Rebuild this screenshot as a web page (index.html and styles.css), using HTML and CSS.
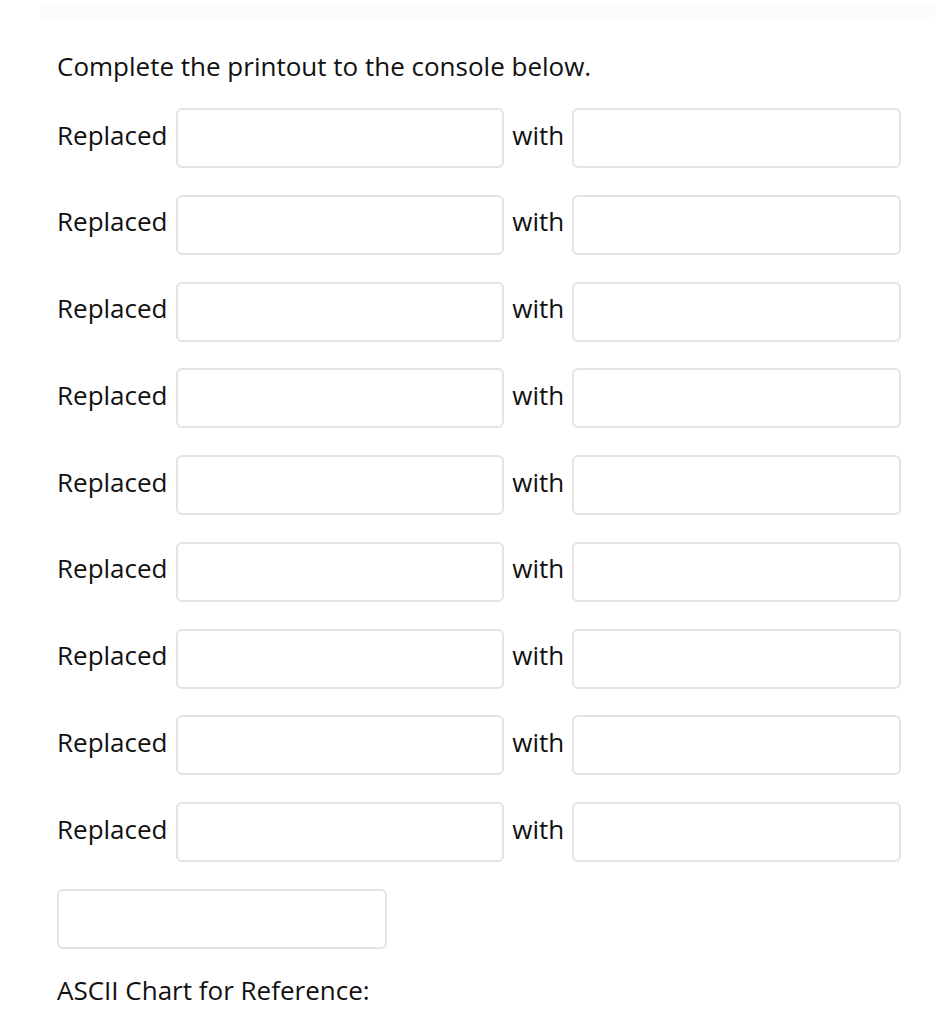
FILE: index.html
```html
<!DOCTYPE html>
<html>
<head>
<meta charset="utf-8">
<link rel="stylesheet" href="styles.css">
</head>
<body>
<div class="page">
  <div class="band"></div>
  <div class="content">
    <p class="intro">Complete the printout to the console below.</p>
    <div class="rows">
      <div class="row"><span class="lbl">Replaced</span><input class="box" type="text"><span class="lbl">with</span><input class="box" type="text"></div>
      <div class="row"><span class="lbl">Replaced</span><input class="box" type="text"><span class="lbl">with</span><input class="box" type="text"></div>
      <div class="row"><span class="lbl">Replaced</span><input class="box" type="text"><span class="lbl">with</span><input class="box" type="text"></div>
      <div class="row"><span class="lbl">Replaced</span><input class="box" type="text"><span class="lbl">with</span><input class="box" type="text"></div>
      <div class="row"><span class="lbl">Replaced</span><input class="box" type="text"><span class="lbl">with</span><input class="box" type="text"></div>
      <div class="row"><span class="lbl">Replaced</span><input class="box" type="text"><span class="lbl">with</span><input class="box" type="text"></div>
      <div class="row"><span class="lbl">Replaced</span><input class="box" type="text"><span class="lbl">with</span><input class="box" type="text"></div>
      <div class="row"><span class="lbl">Replaced</span><input class="box" type="text"><span class="lbl">with</span><input class="box" type="text"></div>
      <div class="row"><span class="lbl">Replaced</span><input class="box" type="text"><span class="lbl">with</span><input class="box" type="text"></div>
      <div class="row"><input class="box" type="text"></div>
    </div>
    <p class="ascii">ASCII Chart for Reference:</p>
  </div>
</div>
</body>
</html>
```
FILE: styles.css
```css
html, body {
  margin: 0;
  padding: 0;
  background: #ffffff;
}
body {
  font-family: "Open Sans", "DejaVu Sans", sans-serif;
  color: #111111;
}
.page {
  padding-top: 4px;
}
.band {
  margin-left: 40px;
  height: 18px;
  background: #fcfcfc;
}
.content {
  padding-left: 57px;
  padding-right: 34px;
}
.intro {
  font-size: 26px;
  line-height: 35px;
  margin: 27px 0 0 0;
}
.rows {
  margin-top: 24px;
  display: flex;
  flex-direction: column;
  gap: 26.75px;
}
.row {
  display: flex;
  align-items: center;
  gap: 8px;
}
.lbl {
  font-size: 26px;
  line-height: 35px;
  margin-bottom: 6px;
}
.box {
  width: 330px;
  height: 60px;
  box-sizing: border-box;
  border: 2px solid #e3e3e3;
  border-radius: 6px;
  background: #fff;
  margin: 0;
  padding: 0 10px;
  font-family: inherit;
  font-size: 20px;
}
.ascii {
  font-size: 26px;
  line-height: 35px;
  margin: 24px 0 0 0;
}
```
